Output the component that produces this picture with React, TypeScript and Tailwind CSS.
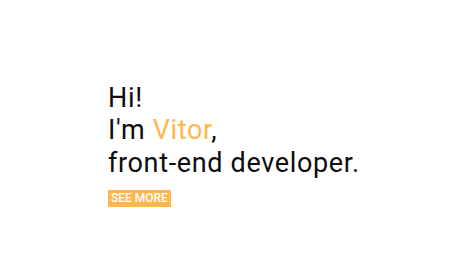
import React from 'react';

const App: React.FC = () => {
  return (
    <div className="h-screen overflow-y-scroll bg-white font-['Roboto',sans-serif] text-[#0d0d0d] [&::-webkit-scrollbar]:w-[6px] [&::-webkit-scrollbar-track]:bg-[#f1f1f1] [&::-webkit-scrollbar-thumb]:bg-[#c1c1c1]">
      <div className="min-h-[1130px]">
        {/* Hero */}
        <section className="h-[266px] pl-[108px] pt-[81.5px]">
          <h1 className="text-[27px] leading-[32.6px] tracking-[0.65px] font-normal">
            Hi!
            <br />
            I'm <span className="text-[#ffb74d]">Vitor</span>,
            <br />
            front-end developer.
          </h1>
          <button className="mt-[10.4px] bg-[#ffb74d] px-[3px] text-[12px] leading-[17px] font-medium text-white uppercase">
            See more
          </button>
        </section>
      </div>
    </div>
  );
};

export default App;
